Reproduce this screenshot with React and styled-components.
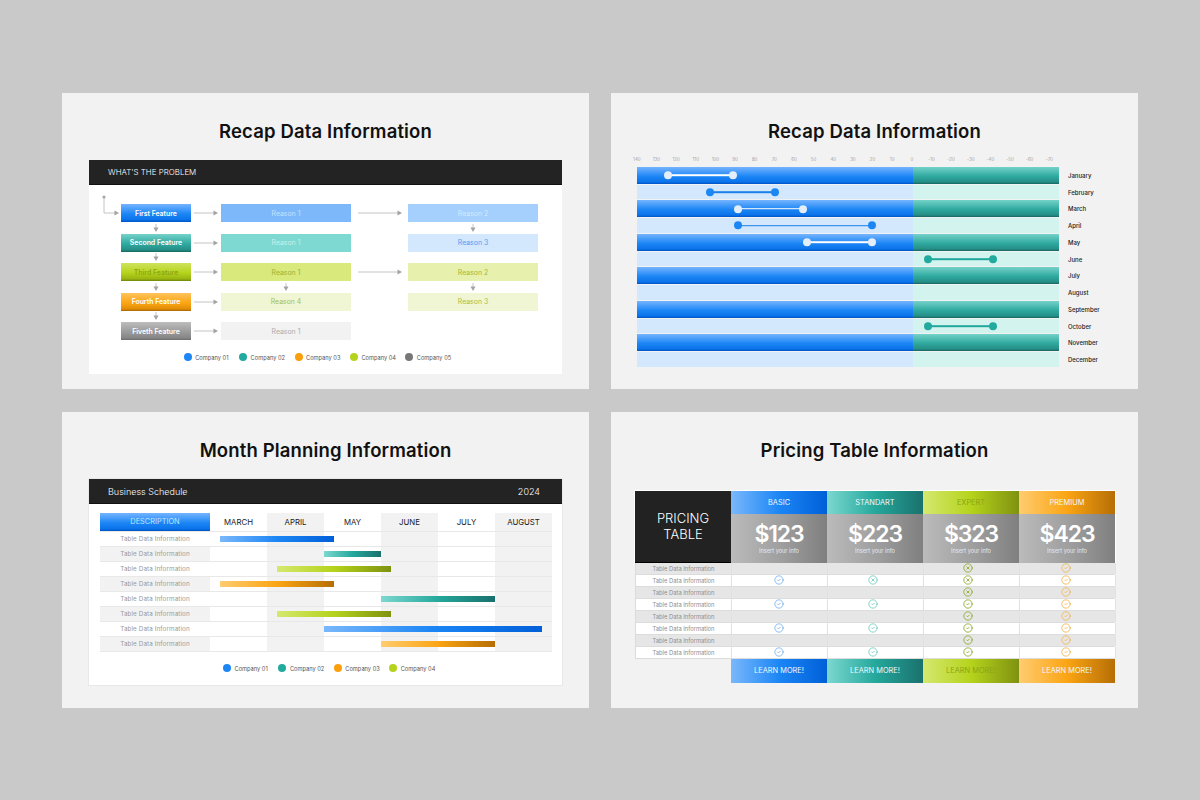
import React from 'react';
import styled, { createGlobalStyle, css } from 'styled-components';
import { CircleCheck, CircleX } from 'lucide-react';

const GlobalStyle = createGlobalStyle`
  html, body {
    margin: 0;
    padding: 0;
    background: #c9c9c9;
    font-family: Inter, "Open Sans", sans-serif;
  }
  * { box-sizing: border-box; }
`;

const colors = {
  blue: '#1c86f5',
  teal: '#22aa9f',
  orange: '#fb9f0c',
  green: '#b5d31c',
  gray: '#777777',
};

const sideGradients = {
  blue: 'linear-gradient(90deg, #7ab8fb 0%, #1c86f5 50%, #005fd8 100%)',
  teal: 'linear-gradient(90deg, #7cd8d0 0%, #25a89c 50%, #1a716d 100%)',
  green: 'linear-gradient(90deg, #d5e86e 0%, #b5d31c 50%, #7f9210 100%)',
  orange: 'linear-gradient(90deg, #ffcc70 0%, #fba514 50%, #b66e05 100%)',
};

const topGradients = {
  blue: 'linear-gradient(180deg, #74b4ff 0%, #1c86f5 55%, #0a73ea 88%, #0052c4 100%)',
  teal: 'linear-gradient(180deg, #74d2c9 0%, #2fa99f 55%, #258f87 88%, #15665f 100%)',
  green: 'linear-gradient(180deg, #cfe35c 0%, #b5d31c 55%, #9ab512 88%, #6c8508 100%)',
  orange: 'linear-gradient(180deg, #ffc35c 0%, #fba514 55%, #e38d08 88%, #ab6604 100%)',
  gray: 'linear-gradient(180deg, #bdbdbd 0%, #9a9a9a 55%, #868686 88%, #6c6c6c 100%)',
};

const Page = styled.div`
  width: 1200px;
  height: 800px;
  padding: 93px 62px;
  display: grid;
  grid-template-columns: 527px 527px;
  grid-template-rows: 296px 296px;
  column-gap: 22px;
  row-gap: 23px;
`;

const Slide = styled.section`
  background: #f2f2f2;
  padding: 28px 27px 0;
  display: flex;
  flex-direction: column;
`;

const Title = styled.h2`
  margin: 0 0 ${({ $gap }) => $gap}px;
  height: 20px;
  line-height: 20px;
  font-size: 18.5px;
  font-weight: 600;
  letter-spacing: 0.15px;
  color: #111;
  text-align: center;
`;

const Panel = styled.div`
  background: #fff;
  height: ${({ $height }) => $height}px;
  display: flex;
  flex-direction: column;
  box-shadow: ${({ $outlined }) => ($outlined ? '0 0 0 1px #e8e8e8' : 'none')};
`;

const PanelHeader = styled.div`
  height: 25px;
  flex: none;
  padding: 0 22px 0 19px;
  display: flex;
  align-items: center;
  justify-content: space-between;
  background: #232323;
  border-bottom: 1px solid #111;
  color: #fff;
  font-size: ${({ $size }) => $size}px;
  font-weight: 300;
`;

const Legend = styled.div`
  display: flex;
  justify-content: center;
  margin-top: ${({ $top }) => $top}px;
  padding-left: ${({ $pad }) => Math.max($pad, 0)}px;
  padding-right: ${({ $pad }) => Math.max(-$pad, 0)}px;
`;

const LegendItem = styled.div`
  width: 55.4px;
  display: flex;
  align-items: center;
  gap: 3.5px;
  font-size: 5.7px;
  color: #555;
  white-space: nowrap;
`;

const LegendDot = styled.span`
  width: 8px;
  height: 8px;
  flex: none;
  border-radius: 50%;
  background: ${({ $color }) => colors[$color]};
`;

const ChartLegend = ({ items, top, pad }) => (
  <Legend $top={top} $pad={pad}>
    {items.map((color, i) => (
      <LegendItem key={color}>
        <LegendDot $color={color} />
        Company 0{i + 1}
      </LegendItem>
    ))}
  </Legend>
);

/* problem flow */

const FlowGrid = styled.div`
  margin-top: 10px;
  display: grid;
  grid-template-columns: 32px 70px 30px 130px 57px 130px;
  grid-template-rows: 9px 18px 11.5px 18px 11.5px 18px 11.5px 18px 11.5px 18px;
`;

const Elbow = styled.svg`
  grid-column: 1;
  grid-row: 1 / 3;
  width: 32px;
  height: 27px;
`;

const FeatureBox = styled.div`
  grid-column: 2;
  grid-row: ${({ $row }) => $row};
  display: flex;
  align-items: center;
  justify-content: center;
  background: ${({ $color }) => topGradients[$color]};
  color: ${({ $color }) => ($color === 'green' ? '#8da514' : '#fff')};
  font-size: 6.9px;
  font-weight: 600;
`;

const ReasonBox = styled.div`
  grid-column: ${({ $col }) => $col};
  grid-row: ${({ $row }) => $row};
  display: flex;
  align-items: center;
  justify-content: center;
  background: ${({ $bg }) => $bg};
  color: ${({ $fg }) => $fg};
  font-size: 6.9px;
`;

const ArrowCell = styled.div`
  grid-column: ${({ $col }) => $col};
  grid-row: ${({ $row }) => $row};
  display: flex;
  align-items: center;
  justify-content: center;
`;

const RightArrow = ({ col, row, width }) => (
  <ArrowCell $col={col} $row={row}>
    <svg width={width} height="6" viewBox={`0 0 ${width} 6`}>
      <path d={`M0 3H${width - 4}`} stroke="#b5b5b5" strokeWidth="0.8" />
      <path d={`M${width - 4.5} 0.5L${width} 3L${width - 4.5} 5.5Z`} fill="#a3a3a3" />
    </svg>
  </ArrowCell>
);

const DownArrow = ({ col, row }) => (
  <ArrowCell $col={col} $row={row}>
    <svg width="6" height="8" viewBox="0 0 6 8">
      <path d="M3 0V4" stroke="#b5b5b5" strokeWidth="0.8" />
      <path d="M0.5 3.5L3 8L5.5 3.5Z" fill="#a3a3a3" />
    </svg>
  </ArrowCell>
);

const features = [
  { name: 'First Feature', color: 'blue' },
  { name: 'Second Feature', color: 'teal' },
  { name: 'Third Feature', color: 'green' },
  { name: 'Fourth Feature', color: 'orange' },
  { name: 'Fiveth Feature', color: 'gray' },
];

const rowOf = (i) => i * 2 + 2;

const reasons = [
  { text: 'Reason 1', col: 4, line: 0, bg: '#7db8fb', fg: '#c5e0ff' },
  { text: 'Reason 2', col: 6, line: 0, bg: '#a5cffc', fg: '#d6e9ff' },
  { text: 'Reason 1', col: 4, line: 1, bg: '#7dd9d2', fg: '#c8f0ec' },
  { text: 'Reason 3', col: 6, line: 1, bg: '#d3e7fd', fg: '#4f9ff5' },
  { text: 'Reason 1', col: 4, line: 2, bg: '#d9e97b', fg: '#9db32f' },
  { text: 'Reason 2', col: 6, line: 2, bg: '#e7f0ac', fg: '#a3b93a' },
  { text: 'Reason 4', col: 4, line: 3, bg: '#f0f6d4', fg: '#a8c04a' },
  { text: 'Reason 3', col: 6, line: 3, bg: '#f0f6d4', fg: '#a8c04a' },
  { text: 'Reason 1', col: 4, line: 4, bg: '#f2f2f2', fg: '#adadad' },
];

const ProblemSlide = () => (
  <Slide>
    <Title $gap={19}>Recap Data Information</Title>
    <Panel $height={214}>
      <PanelHeader $size={7.95}>WHAT'S THE PROBLEM</PanelHeader>
      <FlowGrid>
        <Elbow viewBox="0 0 32 27">
          <circle cx="15" cy="2" r="1.6" fill="#a3a3a3" />
          <path d="M15 2V18H26" fill="none" stroke="#b5b5b5" strokeWidth="0.8" />
          <path d="M25.5 15.5L30 18L25.5 20.5Z" fill="#a3a3a3" />
        </Elbow>
        {features.map((f, i) => (
          <FeatureBox key={f.name} $row={rowOf(i)} $color={f.color}>{f.name}</FeatureBox>
        ))}
        {[0, 1, 2, 3].map((i) => <DownArrow key={i} col={2} row={rowOf(i) + 1} />)}
        {[0, 1, 2, 3, 4].map((i) => <RightArrow key={i} col={3} row={rowOf(i)} width={24} />)}
        <RightArrow col={5} row={rowOf(0)} width={44} />
        <RightArrow col={5} row={rowOf(2)} width={44} />
        <DownArrow col={4} row={rowOf(2) + 1} />
        <DownArrow col={6} row={rowOf(0) + 1} />
        <DownArrow col={6} row={rowOf(2) + 1} />
        {reasons.map((r) => (
          <ReasonBox key={`${r.col}-${r.line}`} $col={r.col} $row={rowOf(r.line)} $bg={r.bg} $fg={r.fg}>
            {r.text}
          </ReasonBox>
        ))}
      </FlowGrid>
      <ChartLegend items={['blue', 'teal', 'orange', 'green', 'gray']} top={13} pad={-6.6} />
    </Panel>
  </Slide>
);

/* month ranges */

const Axis = styled.div`
  margin-left: -11px;
  height: 7px;
  margin-bottom: 4px;
  display: grid;
  grid-template-columns: repeat(22, 19.65px);
`;

const Tick = styled.span`
  font-size: 4.4px;
  line-height: 7px;
  color: #a0a0a0;
  text-align: center;
`;

const MonthList = styled.div`
  margin-left: -1px;
  display: flex;
  flex-direction: column;
  gap: 1px;
`;

const MonthRow = styled.div`
  display: flex;
  align-items: center;
  height: ${({ $strong }) => ($strong ? 16.8 : 14.7)}px;
`;

const Track = styled.div`
  position: relative;
  width: 422px;
  height: 100%;
  flex: none;
  display: grid;
  grid-template-columns: 276px 146px;
`;

const trackColors = {
  negative: { strong: topGradients.teal, pale: '#d3f3ef' },
  positive: { strong: topGradients.blue, pale: '#d3e8fd' },
};

const TrackPart = styled.div`
  background: ${({ $side, $strong }) => trackColors[$side][$strong ? 'strong' : 'pale']};
`;

const MonthLabel = styled.span`
  padding-left: 9px;
  font-size: 6px;
  font-weight: 500;
  color: #222;
`;

const Range = styled.div`
  position: absolute;
  top: 50%;
  left: ${({ $from }) => $from}px;
  width: ${({ $to, $from }) => $to - $from}px;
  height: 1.6px;
  transform: translateY(-50%);
  background: ${({ $tone }) => $tone.line};

  &::before, &::after {
    content: '';
    position: absolute;
    top: 50%;
    width: 8px;
    height: 8px;
    margin-top: -4px;
    border-radius: 50%;
    background: ${({ $tone }) => $tone.dot};
  }
  &::before { left: -4px; }
  &::after { right: -4px; }
`;

const rangeTones = {
  light: { line: '#fff', dot: '#e4eefa' },
  blue: { line: '#1c7fe8', dot: '#1c86f5' },
  teal: { line: '#1ea79b', dot: '#22aa9f' },
};

const months = [
  { name: 'January', range: [30.7, 96, 'light'] },
  { name: 'February', range: [73, 138, 'blue'] },
  { name: 'March', range: [101, 166, 'light'] },
  { name: 'April', range: [101, 235, 'blue'] },
  { name: 'May', range: [170, 235, 'light'] },
  { name: 'June', range: [291, 356, 'teal'] },
  { name: 'July' },
  { name: 'August' },
  { name: 'September' },
  { name: 'October', range: [291, 356, 'teal'] },
  { name: 'November' },
  { name: 'December' },
];

const ticks = Array.from({ length: 22 }, (_, i) => 140 - i * 10);

const RangeSlide = () => (
  <Slide>
    <Title $gap={15}>Recap Data Information</Title>
    <Axis>
      {ticks.map((t) => <Tick key={t}>{t}</Tick>)}
    </Axis>
    <MonthList>
      {months.map((m, i) => (
        <MonthRow key={m.name} $strong={i % 2 === 0}>
          <Track>
            <TrackPart $side="positive" $strong={i % 2 === 0} />
            <TrackPart $side="negative" $strong={i % 2 === 0} />
            {m.range && <Range $from={m.range[0]} $to={m.range[1]} $tone={rangeTones[m.range[2]]} />}
          </Track>
          <MonthLabel>{m.name}</MonthLabel>
        </MonthRow>
      ))}
    </MonthList>
  </Slide>
);

/* schedule */

const ScheduleBody = styled.div`
  margin: 8.5px 10px 0 11px;
`;

const scheduleColumns = css`
  display: grid;
  grid-template-columns: 110px repeat(6, 57px);
`;

const ScheduleHead = styled.div`
  ${scheduleColumns}
  height: 19px;
  border-bottom: 1px solid #e8e8e8;
`;

const DescriptionHead = styled.div`
  display: flex;
  align-items: center;
  justify-content: center;
  background: ${topGradients.blue};
  color: #bfe4ff;
  font-size: 7.4px;
`;

const MonthHead = styled.div`
  display: flex;
  align-items: center;
  justify-content: center;
  background: ${({ $shade }) => ($shade ? '#f2f2f2' : '#fff')};
  color: #222;
  font-size: 7.8px;
`;

const ScheduleRow = styled.div`
  ${scheduleColumns}
  position: relative;
  height: 15.1px;
  border-bottom: 1px solid #e8e8e8;
`;

const RowLabel = styled.div`
  display: flex;
  align-items: center;
  justify-content: center;
  background: ${({ $shade }) => ($shade ? '#f2f2f2' : '#fff')};
  color: #9a9a9a;
  font-size: 6.3px;
  letter-spacing: 0.1px;
`;

const Stripe = styled.div`
  background: ${({ $shade }) => ($shade ? '#f2f2f2' : '#fff')};
`;

const Bar = styled.div`
  position: absolute;
  top: 4px;
  height: 6px;
  left: ${({ $from }) => 110 + $from}px;
  width: ${({ $to, $from }) => $to - $from}px;
  background: ${({ $color }) => sideGradients[$color]};
`;

const scheduleMonths = ['MARCH', 'APRIL', 'MAY', 'JUNE', 'JULY', 'AUGUST'];

const bars = [
  [10, 124, 'blue'],
  [114, 171, 'teal'],
  [67, 181, 'green'],
  [10, 124, 'orange'],
  [171, 285, 'teal'],
  [67, 181, 'green'],
  [114, 332, 'blue'],
  [171, 285, 'orange'],
];

const ScheduleSlide = () => (
  <Slide>
    <Title $gap={19}>Month Planning Information</Title>
    <Panel $height={206} $outlined>
      <PanelHeader $size={9}>
        <span>Business Schedule</span>
        <span>2024</span>
      </PanelHeader>
      <ScheduleBody>
        <ScheduleHead>
          <DescriptionHead>DESCRIPTION</DescriptionHead>
          {scheduleMonths.map((m, i) => <MonthHead key={m} $shade={i % 2 === 1}>{m}</MonthHead>)}
        </ScheduleHead>
        {bars.map(([from, to, color], i) => (
          <ScheduleRow key={i}>
            <RowLabel $shade={i % 2 === 1}>Table Data Information</RowLabel>
            {scheduleMonths.map((m, j) => <Stripe key={m} $shade={j % 2 === 1} />)}
            <Bar $from={from} $to={to} $color={color} />
          </ScheduleRow>
        ))}
      </ScheduleBody>
      <ChartLegend items={['blue', 'teal', 'orange', 'green']} top={12} pad={16.6} />
    </Panel>
  </Slide>
);

/* pricing */

const PricingTable = styled.div`
  margin: 0 -3px;
  width: 480px;
  display: flex;
  flex-direction: column;
`;

const pricingColumns = css`
  display: grid;
  grid-template-columns: repeat(5, 96px);
`;

const PricingHead = styled.div`
  ${pricingColumns}
  grid-template-rows: 23px 49px;
  box-shadow: 0 0 0 1px #fff;
`;

const PricingCorner = styled.div`
  grid-row: 1 / 3;
  display: flex;
  align-items: center;
  justify-content: center;
  padding: 0 20px;
  background: #222;
  border-bottom: 1px solid #000;
  color: #fff;
  font-size: 13px;
  font-weight: 300;
  line-height: 16px;
  text-align: center;
`;

const PlanName = styled.div`
  grid-row: 1;
  display: flex;
  align-items: center;
  justify-content: center;
  background: ${({ $color }) => sideGradients[$color]};
  color: ${({ $color }) => ($color === 'green' ? '#8da514' : '#eef7ff')};
  font-size: 7.4px;
`;

const PriceCell = styled.div`
  grid-row: 2;
  display: flex;
  flex-direction: column;
  align-items: center;
  padding-top: 7.5px;
  background: linear-gradient(90deg, #bbbbbb 0%, #9d9d9d 55%, #7f7f7f 100%);
  color: #fff;
`;

const PriceValue = styled.div`
  font-size: 23px;
  line-height: 26px;
  font-weight: 600;
  letter-spacing: -1.1px;
`;

const PriceNote = styled.div`
  font-size: 5.6px;
  line-height: 8px;
  color: #e8e8e8;
`;

const FeatureRow = styled.div`
  ${pricingColumns}
  height: 12px;
  background: ${({ $shade }) => ($shade ? '#e6e6e6' : '#fff')};
  border-bottom: 1px solid #dcdcdc;
  border-left: 1px solid #dcdcdc;
`;

const FeatureCell = styled.div`
  display: flex;
  align-items: center;
  justify-content: center;
  padding-right: ${({ $nudge }) => $nudge || 0}px;
  border-right: 1px solid #e2e2e2;
  color: #8e8e8e;
  font-size: 5.8px;
`;

const PricingFoot = styled.div`
  ${pricingColumns}
  height: 24px;
`;

const LearnMore = styled.div`
  display: flex;
  align-items: center;
  justify-content: center;
  background: ${({ $color }) => sideGradients[$color]};
  color: ${({ $color }) => ($color === 'green' ? '#8da514' : '#eef7ff')};
  font-size: 7.4px;
`;

const plans = [
  { name: 'BASIC', price: '$123', color: 'blue', mark: '#76aee8', nudge: 2, marks: ['', 'c', '', 'c', '', 'c', '', 'c'] },
  { name: 'STANDART', price: '$223', color: 'teal', mark: '#6dcabf', nudge: 6, marks: ['', 'x', '', 'c', '', 'c', '', 'c'] },
  { name: 'EXPERT', price: '$323', color: 'green', mark: '#8aa52b', nudge: 8, marks: ['x', 'x', 'x', 'c', 'c', 'c', 'c', 'c'] },
  { name: 'PREMIUM', price: '$423', color: 'orange', mark: '#f0b44e', nudge: 4, marks: ['c', 'c', 'c', 'c', 'c', 'c', 'c', 'c'] },
];

const Mark = ({ type, color }) => {
  if (type === 'c') return <CircleCheck size={10} color={color} strokeWidth={2} />;
  if (type === 'x') return <CircleX size={10} color={color} strokeWidth={2} />;
  return null;
};

const PricingSlide = () => (
  <Slide>
    <Title $gap={30.5}>Pricing Table Information</Title>
    <PricingTable>
      <PricingHead>
        <PricingCorner>PRICING TABLE</PricingCorner>
        {plans.map((p) => <PlanName key={p.name} $color={p.color}>{p.name}</PlanName>)}
        {plans.map((p) => (
          <PriceCell key={p.price}>
            <PriceValue>{p.price}</PriceValue>
            <PriceNote>Insert your info</PriceNote>
          </PriceCell>
        ))}
      </PricingHead>
      {Array.from({ length: 8 }, (_, i) => (
        <FeatureRow key={i} $shade={i % 2 === 0}>
          <FeatureCell>Table Data Information</FeatureCell>
          {plans.map((p) => (
            <FeatureCell key={p.name} $nudge={p.nudge}>
              <Mark type={p.marks[i]} color={p.mark} />
            </FeatureCell>
          ))}
        </FeatureRow>
      ))}
      <PricingFoot>
        <div />
        {plans.map((p) => <LearnMore key={p.name} $color={p.color}>LEARN MORE!</LearnMore>)}
      </PricingFoot>
    </PricingTable>
  </Slide>
);

const App = () => (
  <>
    <GlobalStyle />
    <Page>
      <ProblemSlide />
      <RangeSlide />
      <ScheduleSlide />
      <PricingSlide />
    </Page>
  </>
);

export default App;
